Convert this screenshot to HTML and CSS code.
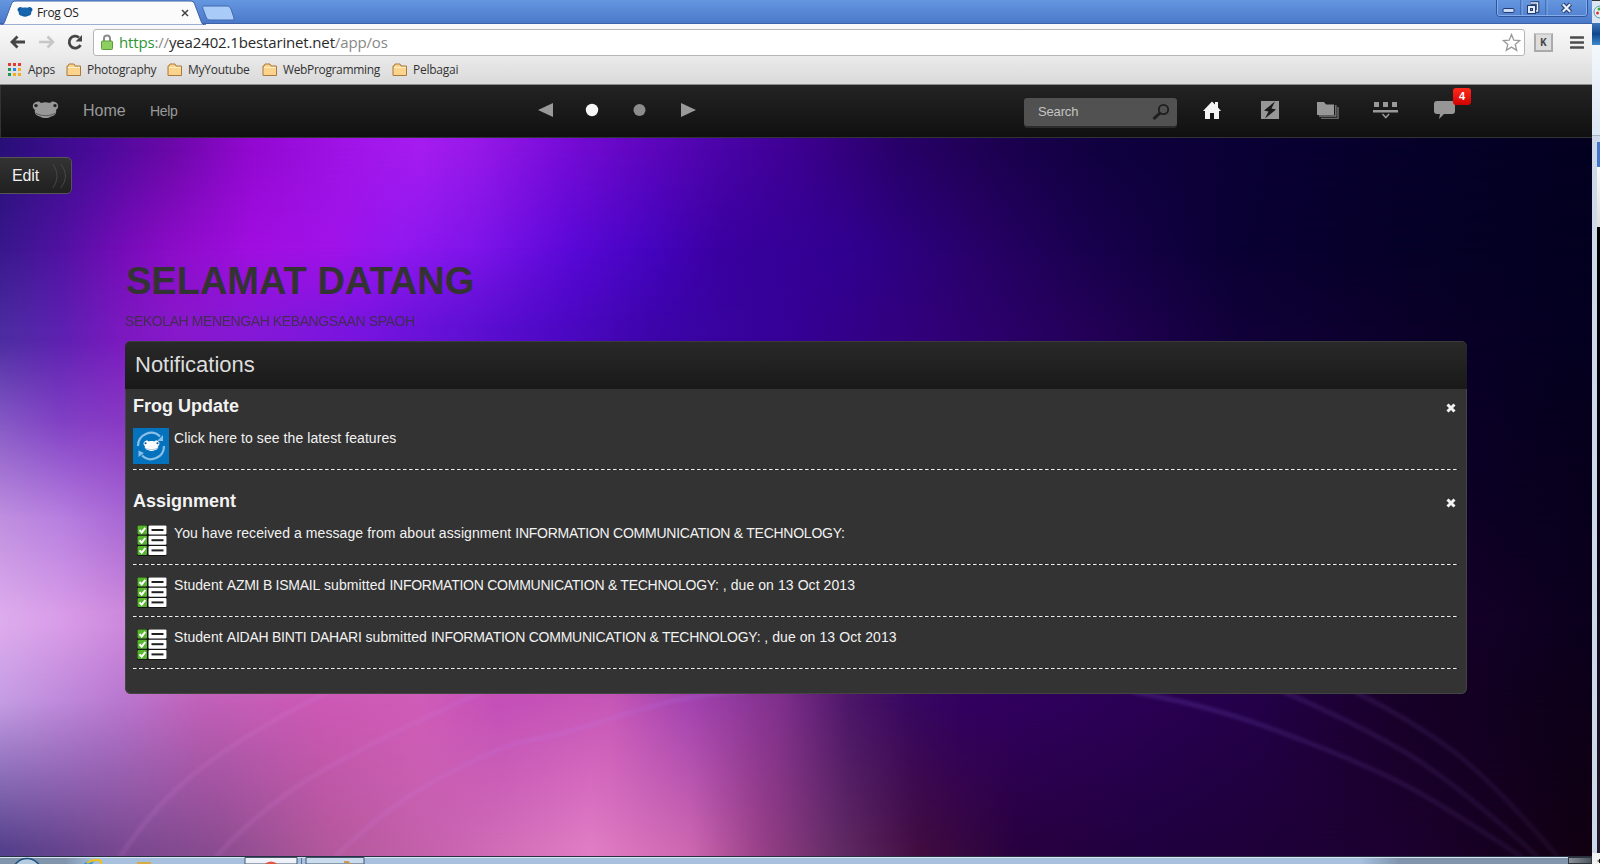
FILE: index.html
```html
<!DOCTYPE html>
<html lang="en">
<head>
  <meta charset="UTF-8">
  <meta name="viewport" content="width=device-width, initial-scale=1.0">
  <title>Frog OS</title>
  <link rel="stylesheet" href="styles.css">
</head>
<body>
  <!-- Shared icons -->
  <svg class="hidden">
    <symbol id="frog" viewBox="0 0 27 18">
      <path d="M4 1c2-1 4-.6 5 1 3-1 6-1 9 0 1-1.600 3-2 5-1 3 1 4 4 2.500 6.500L24 9c1 4-2 6-5 6.500-3 2-8 2-11 0C5 15 2 13 3 9L1.500 7.500C0 5 1 2 4 1z"/>
      <circle class="eye" cx="4" cy="4.600" r="1.700"/>
      <circle class="eye" cx="23" cy="4.600" r="1.700"/>
      <path class="mouth" d="M3.500 12c5 3.500 15 3.500 20 0" fill="none"/>
    </symbol>
    <symbol id="folder" viewBox="0 0 16 14">
      <path d="M1 12V3h1l1-2h5l1 2h5.500v9.500H1z" fill="#fbd38a" stroke="#a9793f"/>
      <path d="M2 4.500h12" stroke="#fff0c8"/>
    </symbol>
    <symbol id="checklist" viewBox="0 0 30 31">
      <rect width="30" height="31" rx="2" fill="#161616"/>
      <g id="check-row">
        <rect x=".5" y=".5" width="9.500" height="9" rx="1" fill="#56b52c"/>
        <path d="M2.500 5l2.200 2.400 3.600-4.600" fill="none" stroke="#fff" stroke-width="2"/>
        <rect x="11.500" y=".5" width="18" height="9" rx="1" fill="#fff"/>
        <rect x="14.500" y="4" width="12" height="2" fill="#222"/>
      </g>
      <use href="#check-row" y="10.200"/>
      <use href="#check-row" y="20.400"/>
    </symbol>
    <symbol id="close" viewBox="0 0 10 10">
      <path d="M1.500 1.500l7 7M8.500 1.500l-7 7" stroke="#f2f2f2" stroke-width="3"/>
    </symbol>
  </svg>

  <div class="screen">
    <div class="browser">
      <!-- Tabs -->
      <div class="tab-strip">
        <svg class="tab-shape" width="240" height="25">
          <path d="M0 25c3 0 4-1 5-4L11 5c1-3 2-4 5-4h174c3 0 4 1 5 4l6 16c1 3 2 4 5 4z" fill="#fbfbfb" stroke="#3c62a8"/>
          <path d="M204 6h23c2 0 3 1 4 3l3 9c0 2 0 2-2 2h-22c-2 0-3-1-4-3l-3-8c-1-2 0-3 1-3z" fill="#a9cbf8" stroke="#4269b0"/>
        </svg>
        <svg class="tab-icon" width="16" height="12"><use href="#frog"/></svg>
        <span class="tab-title">Frog OS</span>
        <svg class="tab-close" width="8" height="8" viewBox="0 0 8 8"><path d="M1 1l6 6M7 1L1 7" stroke="#444" stroke-width="1.500"/></svg>
        <div class="window-buttons">
          <svg width="92" height="17" viewBox="0 0 92 17">
            <path d="M.5 0v13q0 3.500 3 3.500h85q3 0 3-3.500V0M25 0v16M50 0v16" fill="none" stroke="#2f549a"/>
            <path d="M1.500 0v13q0 2.500 2 2.500h85q2 0 2-2.500V0M26 0v15M51 0v15" fill="none" stroke="#85adea"/>
            <rect x="7" y="8.500" width="11" height="4" rx="1" fill="#c9dcf8" stroke="#253b6b"/>
            <path d="M34.500 3h7v8h-3" fill="none" stroke="#253b6b" stroke-width="3.500"/>
            <path d="M34.500 3h7v8h-3" fill="none" stroke="#e2ecfa" stroke-width="1.500"/>
            <rect x="31.500" y="5.500" width="8" height="8" fill="#e2ecfa" stroke="#253b6b"/>
            <rect x="34.500" y="8.500" width="2" height="2" fill="#6f9ae0" stroke="#253b6b"/>
            <path d="M66.500 4l8 8M74.500 4l-8 8" stroke="#253b6b" stroke-width="4.500"/>
            <path d="M66.800 4.300l7.400 7.400M74.200 4.300l-7.400 7.400" stroke="#e8effb" stroke-width="2.200"/>
          </svg>
        </div>
      </div>

      <!-- Address bar -->
      <div class="toolbar">
        <svg width="84" height="20" viewBox="0 0 84 20" fill="none">
          <path d="M17 10H4M9.500 4.500L4 10l5.500 5.500" stroke="#454545" stroke-width="2.800"/>
          <path d="M31 10h14M39.500 4.500L45 10l-5.500 5.500" stroke="#c6c6c6" stroke-width="2.500"/>
          <path d="M71 5.500A6 6 0 1 0 72.500 13" stroke="#454545" stroke-width="2.800"/>
          <path d="M74 3v6.500h-6.500z" fill="#454545"/>
        </svg>
        <div class="address">
          <svg width="12" height="16" viewBox="0 0 12 16">
            <path d="M3 8V4.500a3 3 0 0 1 6 0V8" fill="none" stroke="#8d8d8d" stroke-width="2"/>
            <rect x=".5" y="7" width="11" height="8.500" rx="1" fill="#8cce60" stroke="#5d9b3c"/>
          </svg>
          <span class="url"><span class="secure">https</span><span class="dim">://</span>yea2402.1bestarinet.net<span class="dim">/app/os</span></span>
          <svg class="star" width="19" height="19" viewBox="0 0 19 19"><path d="M9.500 1.500l2.300 5.700 6 .3-4.600 3.900 1.500 6-5.200-3.300-5.200 3.300 1.500-6L1.200 7.500l6-.3z" fill="#fff" stroke="#999" stroke-width="1.300"/></svg>
        </div>
        <span class="key">K</span>
        <svg class="menu" width="14" height="13" viewBox="0 0 14 13"><path d="M1 1.500h12M1 6.500h12M1 11.500h12" stroke="#4c4c4c" stroke-width="2.600" stroke-linecap="round"/></svg>
      </div>

      <!-- Bookmarks -->
      <div class="bookmarks">
        <svg width="13" height="13" viewBox="0 0 13 13">
          <path d="M0 1.500h3M5 1.500h3M10 1.500h3" stroke="#e23b30" stroke-width="3"/>
          <path d="M0 6.500h3" stroke="#1b9a55" stroke-width="3"/>
          <path d="M5 6.500h3" stroke="#2b84ee" stroke-width="3"/>
          <path d="M10 6.500h3M5 11.500h3M10 11.500h3" stroke="#f2ae1c" stroke-width="3"/>
          <path d="M0 11.500h3" stroke="#1b9a55" stroke-width="3"/>
        </svg>
        <span class="bm-apps">Apps</span>
        <svg width="16" height="14"><use href="#folder"/></svg>
        <span class="bm-photo">Photography</span>
        <svg width="16" height="14"><use href="#folder"/></svg>
        <span class="bm-tube">MyYoutube</span>
        <svg width="16" height="14"><use href="#folder"/></svg>
        <span class="bm-web">WebProgramming</span>
        <svg width="16" height="14"><use href="#folder"/></svg>
        <span>Pelbagai</span>
      </div>

      <!-- Frog navbar -->
      <div class="navbar">
        <svg class="logo" width="27" height="18"><use href="#frog"/></svg>
        <a class="home">Home</a>
        <a class="help">Help</a>
        <div class="pager">
          <svg width="160" height="16" viewBox="0 0 160 16">
            <path d="M0 8l15-7v14z" fill="#999"/>
            <circle cx="54" cy="8" r="6.200" fill="#f6f6f6"/>
            <circle cx="101.500" cy="8" r="6" fill="#8c8c8c"/>
            <path d="M158 8l-15-7v14z" fill="#999"/>
          </svg>
        </div>
        <div class="search">
          <span>Search</span>
          <svg width="18" height="18" viewBox="0 0 18 18"><circle cx="11.500" cy="6.500" r="4.700" fill="none" stroke="#1e1e1e" stroke-width="1.800"/><path d="M8 10l-6.500 6" stroke="#1e1e1e" stroke-width="3"/></svg>
        </div>
        <div class="nav-icons">
          <svg width="20" height="20" viewBox="0 0 20 20"><path d="M1 11l9-9.500 3 3V2h3v5.500l3 3.500h-2v8h-5v-6H8v6H3v-8z" fill="#f5f5f5"/></svg>
          <svg width="18" height="18" viewBox="0 0 18 18"><path d="M0 0h18v18H0z" fill="#969696"/><path d="M14 .5L3 9.500l4.500 1L4 17.500 15 8.500l-4.500-1z" fill="#1a1a1a"/></svg>
          <svg width="22" height="18" viewBox="0 0 22 18"><path d="M4 17.500h17V6" fill="none" stroke="#666" stroke-width="1.600"/><path d="M2 15h16.800V4" fill="none" stroke="#777" stroke-width="1.400"/><path d="M0 1h7l2 2.500h8V14H0z" fill="#979797"/></svg>
          <svg width="26" height="18" viewBox="0 0 26 18"><path d="M1 1h5v5H1zM10 1h5v5h-5zM19 1h5v5h-5zM0 9h25v2.500H0z" fill="#999"/><path d="M9.500 13l3.300 3.500 3.300-3.500" fill="none" stroke="#999" stroke-width="1.600"/></svg>
          <div class="messages">
            <svg width="21" height="18" viewBox="0 0 21 18"><path d="M3 0h15q3 0 3 3v7q0 3-3 3h-8l-5 5 1-5H3q-3 0-3-3V3q0-3 3-3z" fill="#969696"/></svg>
            <span class="badge">4</span>
          </div>
        </div>
      </div>

      <!-- Desktop with wallpaper -->
      <div class="desktop">
        <div class="wallpaper">
          <div class="band band1"></div>
          <div class="band band2"></div>
          <div class="band band3"></div>
          <div class="band band4"></div>
          <div class="band band5"></div>
          <div class="band band6"></div>
          <div class="band band7"></div>
          <div class="band band8"></div>
          <svg class="arcs" width="1592" height="719" viewBox="0 138 1592 719">
            <defs>
              <linearGradient id="arc-fade" gradientUnits="userSpaceOnUse" x1="100" x2="1560" y1="0" y2="0">
                <stop offset="0" stop-color="#f090e0" stop-opacity=".13"/>
                <stop offset=".5" stop-color="#a070ff" stop-opacity=".15"/>
                <stop offset=".75" stop-color="#9070f0" stop-opacity=".17"/>
                <stop offset="1" stop-color="#a060d0" stop-opacity=".08"/>
              </linearGradient>
            </defs>
            <g fill="none" stroke="url(#arc-fade)" stroke-width="5">
              <path d="M335 857Q390 803 449 773T531 740 622 715 745 692M1133 692Q1180 700 1224 713T1327 750 1418 792 1522 857"/>
              <path d="M216 857Q265 803 327 768T482 692M1284 692Q1345 718 1398 748T1538 857"/>
              <path d="M120 857Q155 803 204 766T328 692M1355 692Q1408 718 1449 748T1558 857"/>
            </g>
          </svg>
        </div>

        <div class="edit">
          <span>Edit</span>
          <svg width="16" height="28" viewBox="0 0 16 28" fill="none" stroke="#474747"><path d="M1 2q8 12 0 24M9 2q9 12 0 24"/></svg>
        </div>

        <div class="content">
          <h1>SELAMAT DATANG</h1>
          <p class="school">SEKOLAH MENENGAH KEBANGSAAN SPAOH</p>

          <div class="panel">
            <div class="panel-header">Notifications</div>
            <div class="panel-body">
              <div class="group">
                <div class="group-title">
                  <h3>Frog Update</h3>
                  <svg width="10" height="10"><use href="#close"/></svg>
                </div>
                <div class="item">
                  <svg class="update" width="36" height="36" viewBox="0 0 36 36">
                    <rect width="36" height="36" fill="#0572be"/>
                    <path d="M5 18a13 13 0 0 1 22-9.500M31 18a13 13 0 0 1-22 9.500" fill="none" stroke="#8abfe6" stroke-width="2.200"/>
                    <path d="M30 7v6h-6zM5.500 22.500v6.500l5.500-4z" fill="#8abfe6"/>
                    <use href="#frog" x="10" y="12" width="17" height="12"/>
                  </svg>
                  <span>Click here to see the latest features</span>
                </div>
              </div>
              <div class="group">
                <div class="group-title">
                  <h3>Assignment</h3>
                  <svg width="10" height="10"><use href="#close"/></svg>
                </div>
                <div class="item">
                  <svg class="task" width="30" height="31"><use href="#checklist"/></svg>
                  <span>You have received a message from about assignment <span class="caps">INFORMATION COMMUNICATION &amp; TECHNOLOGY:</span></span>
                </div>
                <div class="item">
                  <svg class="task" width="30" height="31"><use href="#checklist"/></svg>
                  <span>Student <span class="caps">AZMI B ISMAIL</span> submitted <span class="caps">INFORMATION COMMUNICATION &amp; TECHNOLOGY:</span> , due on 13 Oct 2013</span>
                </div>
                <div class="item">
                  <svg class="task" width="30" height="31"><use href="#checklist"/></svg>
                  <span>Student <span class="caps">AIDAH BINTI DAHARI</span> submitted <span class="caps">INFORMATION COMMUNICATION &amp; TECHNOLOGY:</span> , due on 13 Oct 2013</span>
                </div>
              </div>
            </div>
          </div>
        </div>
      </div>

      <!-- Top edge of the taskbar -->
      <div class="taskbar">
        <svg width="380" height="7" viewBox="0 0 380 7">
          <circle cx="27" cy="16" r="14.500" fill="#b4cbe0" stroke="#1d4f7c" stroke-width="1.500"/>
          <path d="M83 7q6-4 12-4l-3 4z" fill="#3a9bd8"/>
          <path d="M87 6q8-5 14-2v3" fill="none" stroke="#f0c020" stroke-width="2"/>
          <path d="M137 6h14" stroke="#d9ab45" stroke-width="2"/>
          <path d="M245 7V.5h52V7z" fill="#eef2f8" stroke="#42566e"/>
          <path d="M301.500 1v6" stroke="#54708f"/>
          <path d="M306 7V.5h58V7z" fill="#c9dbec" stroke="#42566e"/>
          <circle cx="271" cy="14" r="9.500" fill="#e05545"/>
          <path d="M344 5h4l3 3" fill="none" stroke="#c99a5c" stroke-width="2"/>
        </svg>
        <div class="show-desktop"></div>
      </div>
    </div>

    <!-- Window behind, right edge -->
    <div class="behind">
      <div class="behind-title"><svg width="8" height="22" viewBox="0 0 8 22"><circle cx="8" cy="11" r="6" fill="#e8eef2" stroke="#4a9bb0"/><circle cx="5.500" cy="12" r="1.500" fill="#d33"/><circle cx="7" cy="8" r="1.500" fill="#3a3"/></svg></div>
      <div class="behind-bar"></div>
      <div class="behind-ribbon"></div>
      <div class="behind-body">
        <div class="behind-tab"></div>
        <div class="behind-tools"></div>
        <div class="behind-page"></div>
      </div>
      <div class="behind-status"><svg width="8" height="11" viewBox="0 0 8 11"><path d="M5.500 8H8M7.500 6v4" stroke="#111"/></svg></div>
    </div>
  </div>
</body>
</html>
```

FILE: styles.css
```css
body {
  margin: 0;
  font-family: "Liberation Sans", Arial, sans-serif;
  overflow: hidden;
}
.hidden {
  position: absolute;
  width: 0;
  height: 0;
}
.screen {
  display: flex;
  width: 1600px;
  height: 864px;
}
.browser {
  display: flex;
  flex-direction: column;
  width: 1592px;
}

/* Browser chrome */
.tab-strip {
  position: relative;
  display: flex;
  align-items: center;
  height: 24px;
  flex: none;
  background: linear-gradient(#6597e0, #4b79ca);
  border-bottom: 1px solid #3c62a8;
  box-sizing: border-box;
  font: 12px "Open Sans", sans-serif;
  color: #222;
}
.tab-shape {
  position: absolute;
  left: 0;
  top: 0;
}
.tab-icon {
  position: relative;
  margin-left: 17px;
  fill: #1766ae;
}
.tab-icon, .update {
  --eye: #0d4c8c;
}
.tab-title {
  position: relative;
  margin-left: 4px;
  width: 144px;
  padding-top: 2px;
  letter-spacing: -0.35px;
}
.tab-close {
  position: relative;
  margin-top: 3px;
}
.window-buttons {
  margin-left: auto;
  margin-right: 4px;
  align-self: flex-start;
}
.window-buttons svg {
  display: block;
}
.toolbar {
  display: flex;
  align-items: center;
  height: 35px;
  flex: none;
  background: linear-gradient(#fafafa, #e9e9e9);
  box-sizing: border-box;
  padding: 1px 0 0 8px;
}
.address {
  display: flex;
  align-items: center;
  width: 1432px;
  height: 27px;
  margin-left: 1px;
  padding: 0 3px 0 7px;
  background: #fff;
  border: 1px solid #b5b5b5;
  border-radius: 3px;
  box-sizing: border-box;
}
.url {
  margin-left: 6px;
  font: 15px "Open Sans", sans-serif;
  letter-spacing: -0.15px;
  color: #2a2a2a;
}
.secure {
  color: #2d9632;
}
.dim {
  color: #888;
}
.star {
  margin-left: auto;
}
.key {
  width: 19px;
  height: 19px;
  margin-left: 9px;
  padding-left: 4px;
  font: bold 10px/14px "Open Sans", sans-serif;
  color: #444;
  background: #ddd;
  border: 2px solid #aaa;
  border-top-color: #ccc;
  box-sizing: border-box;
}
.menu {
  margin-left: 17px;
}
.bookmarks {
  display: flex;
  align-items: center;
  height: 26px;
  flex: none;
  padding: 0 0 4px 8px;
  background: linear-gradient(#e8e8e8, #dadada);
  border-bottom: 1px solid #8c8c8c;
  box-sizing: border-box;
  font: 12px "Open Sans", sans-serif;
  letter-spacing: -0.25px;
  color: #333;
}
.bookmarks svg {
  flex: none;
  margin-right: 5px;
}
.bm-apps {
  width: 38px;
  margin-left: 2px;
}
.bm-photo {
  width: 80px;
}
.bm-tube {
  width: 74px;
}
.bm-web {
  width: 109px;
  letter-spacing: -0.35px;
}

/* Navbar */
.navbar {
  display: flex;
  align-items: center;
  height: 53px;
  flex: none;
  padding-bottom: 1px;
  background: linear-gradient(#232323, #101010);
  border-bottom: 1px solid #333;
  border-left: 1px solid #333;
  box-sizing: border-box;
  color: #999;
}
.logo {
  margin-left: 31px;
  margin-top: -1px;
  fill: #989898;
  --eye: #222;
}
.eye {
  fill: var(--eye);
}
.mouth {
  stroke: var(--eye);
  opacity: 0.5;
}
.home {
  width: 42px;
  margin-left: 24px;
  font-size: 16px;
}
.help {
  width: 30px;
  margin-left: 25px;
  font-size: 14px;
  letter-spacing: -0.3px;
}
.pager {
  margin-left: 358px;
  margin-top: -1px;
}
.pager svg {
  display: block;
}
.search {
  display: flex;
  align-items: center;
  justify-content: space-between;
  width: 153px;
  height: 28px;
  margin: 2px 0 0 326px;
  padding: 0 7px 0 14px;
  box-sizing: border-box;
  background: #515151;
  border-radius: 3px;
  box-shadow: 0 2px 0 #2b2b2b;
  font-size: 13px;
  letter-spacing: -0.15px;
  color: #c4c4c4;
}
.nav-icons {
  display: flex;
  align-items: center;
  margin: -2px 0 0 25px;
}
.nav-icons > svg:nth-child(2) {
  margin-left: 39px;
}
.nav-icons > svg:nth-child(3) {
  margin-left: 38px;
}
.nav-icons > svg:nth-child(4) {
  margin-left: 34px;
}
.messages {
  position: relative;
  margin-left: 35px;
}
.messages svg {
  display: block;
}
.badge {
  position: absolute;
  left: 19px;
  top: -13px;
  width: 18px;
  height: 17px;
  border-radius: 3px;
  background: linear-gradient(#ff2a1c, #cf0202);
  color: #fff;
  font: bold 11px/16px "Liberation Sans", sans-serif;
  text-align: center;
}

/* Wallpaper: horizontal colour bands blended vertically */
.desktop {
  position: relative;
  height: 719px;
  flex: none;
}
.wallpaper, .band, .arcs {
  position: absolute;
  left: 0;
  top: 0;
  width: 100%;
  height: 100%;
}
.wallpaper {
  overflow: hidden;
}
.band1 {
  background: linear-gradient(90deg, #280f78, #4a0a9a 100px, #6a08a8 170px, #9208d0 250px, #a014e8 350px, #a51cf0 420px, #9518e8 480px, #780cd8 560px, #6006c0 640px, #4a04a8 720px, #3c0090 800px, #280068 900px, #1c0050 1000px, #100040 1100px, #0a0034 1250px, #06002a 1400px, #030020);
}
.band2 {
  background: linear-gradient(90deg, #38188c, #5012a2 60px, #740cb8 120px, #8c0cc8 170px, #a00ee0 250px, #a012e8 330px, #9018f0 400px, #7c14e8 480px, #5a08d8 570px, #4404c0 650px, #3a00a0 720px, #300090 850px, #280068 980px, #1a0050 1080px, #0a0034 1230px, #060028 1400px, #030020);
  mask-image: linear-gradient(transparent 10px, #000 115px);
}
.band3 {
  background: linear-gradient(90deg, #4a2ca0, #5c20b0 60px, #7c18c0 125px, #8818cc 180px, #8418d8 260px, #7814e0 360px, #6010d4 460px, #4c08c4 560px, #3c04a8 660px, #340094 800px, #300078 930px, #240058 1080px, #100038 1240px, #0a0028 1420px, #040020);
  mask-image: linear-gradient(transparent 110px, #000 190px);
}
.band4 {
  background: linear-gradient(90deg, #8458c4, #8040c4 60px, #8838c4 125px, #3c0490 700px, #280050 1200px, #0a0028 1440px, #06001c);
  mask-image: linear-gradient(transparent 200px, #000 282px);
}
.band5 {
  background: linear-gradient(90deg, #c090e0, #b880e0 60px, #a868d4 125px, #5020a0 700px, #280050 1200px, #0e0026 1450px, #08001c);
  mask-image: linear-gradient(transparent 282px, #000 382px);
}
.band6 {
  background: linear-gradient(90deg, #dcacec, #d89ce8 60px, #cc88dc 125px, #c050b0 500px, #340060 950px, #150028 1460px, #0a001c);
  mask-image: linear-gradient(transparent 382px, #000 475px);
}
.band7 {
  background: linear-gradient(90deg, #c49ce4, #b878d0 115px, #c060b8 200px, #cc58b4 320px, #d05cb8 420px, #c450b8 500px, #c858b8 610px, #a444b0 690px, #80308c 780px, #4c1668 850px, #380860 910px, #320060 970px, #2c0058 1100px, #240048 1260px, #180028 1400px, #0c0018);
  mask-image: linear-gradient(transparent 490px, #000 565px);
}
.band8 {
  background: linear-gradient(90deg, #54408c, #784890 120px, #8c4c90 220px, #b4589c 330px, #c864b0 450px, #e07cc4 590px, #cc66b0 690px, #984088 760px, #602a64 840px, #400c40 920px, #280040 1020px, #200040 1150px, #1c0030 1400px, #100010);
  mask-image: linear-gradient(transparent 565px, #000 710px);
}
.arcs {
  filter: blur(1.5px);
}

.edit {
  position: absolute;
  left: -1px;
  top: 19px;
  display: flex;
  align-items: center;
  justify-content: space-between;
  width: 73px;
  height: 37px;
  padding: 1px 3px 0 12px;
  box-sizing: border-box;
  background: linear-gradient(#333, #202020);
  border: 1px solid #555;
  border-radius: 0 5px 5px 0;
  color: #f0f0f0;
  font-size: 16px;
  letter-spacing: -0.1px;
}
.content {
  position: relative;
  width: 1342px;
  margin-left: 125px;
  padding-top: 121px;
}
h1 {
  margin: 0 0 0 1px;
  font-size: 38px;
  line-height: 44px;
  color: #333;
}
.school {
  height: 20px;
  margin: 8px 0 10px;
  font-size: 14px;
  line-height: 20px;
  letter-spacing: -0.41px;
  color: #333;
  opacity: 0.8;
}
.panel {
  height: 353px;
  background: #333;
  border-radius: 6px;
  overflow: hidden;
  box-shadow: inset 0 0 0 1px #444;
}
.panel-header {
  height: 48px;
  padding-left: 10px;
  box-sizing: border-box;
  background: linear-gradient(#292929, #191919);
  border-top: 1px solid #3a3a3a;
  font-size: 22px;
  line-height: 46px;
  color: #ddd;
}
.panel-body {
  padding: 0 8px;
}
.group {
  margin-bottom: 14px;
  color: #f2f2f2;
}
.group-title {
  display: flex;
  justify-content: space-between;
  height: 39px;
  padding-right: 3px;
}
.group-title svg {
  margin-top: 14px;
}
h3 {
  margin: 0;
  font-size: 18px;
  line-height: 34px;
}
.item {
  display: flex;
  height: 42px;
  margin-bottom: 9.8px;
  font-size: 14px;
  line-height: 20px;
  letter-spacing: 0.08px;
  background: repeating-linear-gradient(90deg, #eee 0 3px, #999 3px 4px, #222 4px 6px) bottom / 100% 1px no-repeat;
}
.item:last-child {
  margin-bottom: 0;
}
.caps {
  letter-spacing: -0.25px;
}
.update {
  margin-right: 5px;
  fill: #fff;
}
.task {
  margin: 2px 7px 0 4px;
}

/* Taskbar */
.taskbar {
  position: relative;
  display: flex;
  justify-content: space-between;
  height: 7px;
  flex: none;
  overflow: hidden;
  background: linear-gradient(90deg, #8094ac 65px, #a6c0de 95px, #a6c0de 1360px, #8094ac 1400px);
  box-shadow: inset 0 1px 0 #d5e3f0, 0 -1px 0 #263040;
}
.show-desktop {
  width: 22px;
  background: linear-gradient(90deg, #8a929c, #50565e);
  border: 1px solid #30363e;
}

/* Window behind */
.behind {
  display: flex;
  flex-direction: column;
  width: 8px;
  overflow: hidden;
}
.behind-title {
  height: 23px;
  background: #dce6f0;
  border-top: 1px solid #333;
  box-sizing: border-box;
}
.behind-bar {
  height: 22px;
  background: linear-gradient(#3f78bc, #12468c 50%, #3c8ad0);
}
.behind-ribbon {
  height: 91px;
  background: linear-gradient(#f4f8fd, #dbe6f4);
  border-bottom: 1px solid #a8b4c6;
  box-sizing: border-box;
}
.behind-body {
  display: flex;
  flex-direction: column;
  flex: 1;
  padding-top: 6px;
  padding-left: 5px;
  background: #cdd8e8;
}
.behind-tab {
  height: 25px;
  background: #4676cc;
}
.behind-tools {
  height: 60px;
  background: linear-gradient(#fafafa, #ddd);
}
.behind-page {
  flex: 1;
  background: linear-gradient(#000, #0b0418 50%, #241c2c);
}
.behind-status {
  height: 11px;
  background: #f2f2f2;
}
.behind-status svg {
  display: block;
}
```
